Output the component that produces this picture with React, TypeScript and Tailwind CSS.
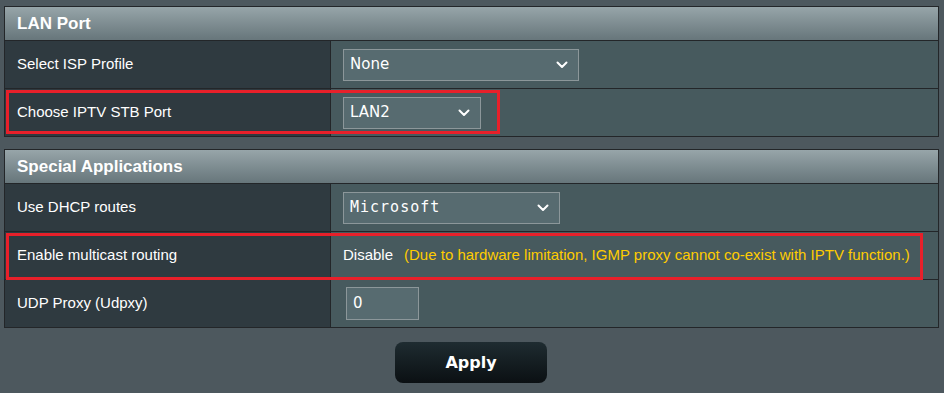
import React from 'react';

const Chevron = () => (
  <svg width="12" height="8" viewBox="0 0 12 8" className="shrink-0">
    <path d="M1.5 1.5 L6 6 L10.5 1.5" fill="none" stroke="#ffffff" strokeWidth="2" strokeLinecap="round" strokeLinejoin="round" />
  </svg>
);

const Select = ({ value, width, mono }: { value: string; width: string; mono?: boolean }) => (
  <div
    className={`${width} h-[32px] bg-[#576b70] border border-[#8c979a] flex items-center justify-between pl-[6px] pr-[10px] text-white text-[15px] ${
      mono ? "font-['DejaVu_Sans_Mono',monospace] tracking-[1px]" : "font-['DejaVu_Sans',sans-serif]"
    }`}
  >
    <span>{value}</span>
    <Chevron />
  </div>
);

const Row = ({ label, children }: { label: string; children: React.ReactNode }) => (
  <div className="flex h-[48px] border-t border-[#232629]">
    <div className="w-[325px] bg-[#2f3a40] flex items-center pl-[12px] text-white text-[15px]">{label}</div>
    <div className="flex-1 bg-[#475a5e] border-l border-[#232629] flex items-center pl-[12px]">{children}</div>
  </div>
);

const Section = ({ title, children }: { title: string; children: React.ReactNode }) => (
  <div className="w-[935px] border border-[#232629]">
    <div className="h-[33px] bg-gradient-to-b from-[#97a5a9] to-[#67767b] flex items-center pl-[12px] text-white text-[17px] font-bold">
      {title}
    </div>
    {children}
  </div>
);

export default function App() {
  return (
    <div className="relative w-[944px] h-[393px] bg-[#4d585e] pt-[6px] pl-[4px] font-['Liberation_Sans',Arial,sans-serif] overflow-hidden">
      <Section title="LAN Port">
        <Row label="Select ISP Profile">
          <Select value="None" width="w-[236px]" />
        </Row>
        <Row label="Choose IPTV STB Port">
          <Select value="LAN2" width="w-[138px]" />
        </Row>
      </Section>

      <div className="h-[12px]" />

      <Section title="Special Applications">
        <Row label="Use DHCP routes">
          <Select value="Microsoft" width="w-[217px]" mono />
        </Row>
        <Row label="Enable multicast routing">
          <span className="text-white text-[15px]">Disable</span>
          <span className="ml-[11px] text-[#ffcc00] text-[15px]">
            (Due to hardware limitation, IGMP proxy cannot co-exist with IPTV function.)
          </span>
        </Row>
        <Row label="UDP Proxy (Udpxy)">
          <div className="ml-[3px] w-[73px] h-[33px] bg-[#576b70] border border-[#8c979a] flex items-center pl-[6px] text-white text-[15px] font-['DejaVu_Sans',sans-serif]">
            0
          </div>
        </Row>
      </Section>

      <div className="flex justify-center pt-[14px] pr-[6px]">
        <button className="w-[152px] h-[41px] rounded-[8px] bg-gradient-to-b from-[#1f2c31] to-[#0b1013] text-white text-[16px] font-bold font-['DejaVu_Sans',sans-serif]">
          Apply
        </button>
      </div>

      <div className="absolute left-[6px] top-[90px] w-[494px] h-[44px] border-[3px] border-[#e8202a]" />
      <div className="absolute left-[6px] top-[233px] w-[917px] h-[47px] border-[3px] border-[#e8202a]" />
    </div>
  );
}
